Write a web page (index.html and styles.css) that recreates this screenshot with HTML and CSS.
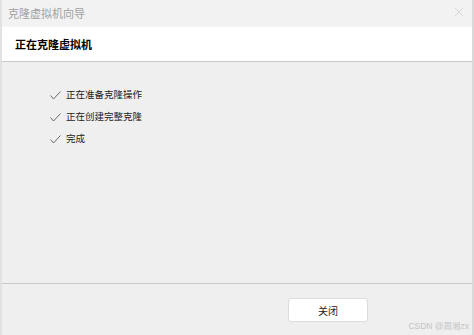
FILE: index.html
```html
<!DOCTYPE html>
<html>
<head>
    <title>克隆虚拟机向导</title>
    <link rel="stylesheet" href="styles.css">
</head>
<body>
    <div class="window">
        <div class="titlebar">
            <span class="title">克隆虚拟机向导</span>
            <span class="close">
                <svg width="10" height="10" viewBox="0 0 10 10"><path d="M1 1L9 9M9 1L1 9" stroke="#d6d6d6" stroke-width="1"/></svg>
            </span>
        </div>
        <div class="header">
            <h1>正在克隆虚拟机</h1>
        </div>
        <div class="content">
            <ul class="steps">
                <li><svg class="check" width="11" height="9" viewBox="0 0 11 9"><path d="M0.5 4.5L3.5 8L10.5 0.5" fill="none" stroke="#6a6a6a" stroke-width="1"/></svg>正在准备克隆操作</li>
                <li><svg class="check" width="11" height="9" viewBox="0 0 11 9"><path d="M0.5 4.5L3.5 8L10.5 0.5" fill="none" stroke="#6a6a6a" stroke-width="1"/></svg>正在创建完整克隆</li>
                <li><svg class="check" width="11" height="9" viewBox="0 0 11 9"><path d="M0.5 4.5L3.5 8L10.5 0.5" fill="none" stroke="#6a6a6a" stroke-width="1"/></svg>完成</li>
            </ul>
        </div>
        <div class="footer">
            <button class="btn">关闭</button>
            <span class="mark">CSDN @周湘zx</span>
        </div>
    </div>
</body>
</html>
```

FILE: styles.css
```css
body {
    margin: 0;
    padding: 0;
    background: #efefef;
    font-family: "Noto Sans CJK SC", "Noto Sans", sans-serif;
    overflow: hidden;
}

.window {
    width: 474px;
    height: 335px;
    display: flex;
    flex-direction: column;
    background: #efefef;
    border-left: 2px solid #e2e2e2;
    border-right: 2px solid #d9d9d9;
    box-sizing: border-box;
}

.titlebar {
    height: 26px;
    display: flex;
    align-items: center;
    justify-content: space-between;
    padding: 0 8px 0 6px;
    background: #f2f2f2;
    border-bottom: 1px solid #f6f6f6;
}

.title {
    font-size: 11px;
    color: #a0a0a0;
}

.close {
    display: flex;
    margin-top: -2px;
}

.header {
    height: 34px;
    background: #ffffff;
    display: flex;
    align-items: center;
    padding-left: 13px;
    border-bottom: 1px solid #c9c9c9;
}

.header h1 {
    margin: 0;
    font-size: 11px;
    font-weight: bold;
    color: #000;
}

.content {
    flex: 1;
    padding-top: 21px;
    border-bottom: 1px solid #c9c9c9;
}

.steps {
    list-style: none;
    margin: 0;
    padding: 0 0 0 48px;
}

.steps li {
    height: 22px;
    display: flex;
    align-items: center;
    font-size: 9.5px;
    color: #222;
}

.check {
    margin-right: 5px;
    margin-top: 2px;
}

.footer {
    height: 51px;
    position: relative;
    display: flex;
    align-items: flex-start;
    padding: 14px 0 0 286px;
    box-sizing: border-box;
}

.btn {
    width: 80px;
    height: 24px;
    background: #ffffff;
    border: 1px solid #dcdcdc;
    border-radius: 3px;
    font-family: inherit;
    font-size: 10px;
    color: #222;
    padding: 0;
}

.mark {
    position: absolute;
    right: 3px;
    bottom: 4px;
    font-family: "Liberation Sans", "Noto Sans CJK SC", sans-serif;
    font-size: 8.5px;
    color: #c4c4c4;
}
```
